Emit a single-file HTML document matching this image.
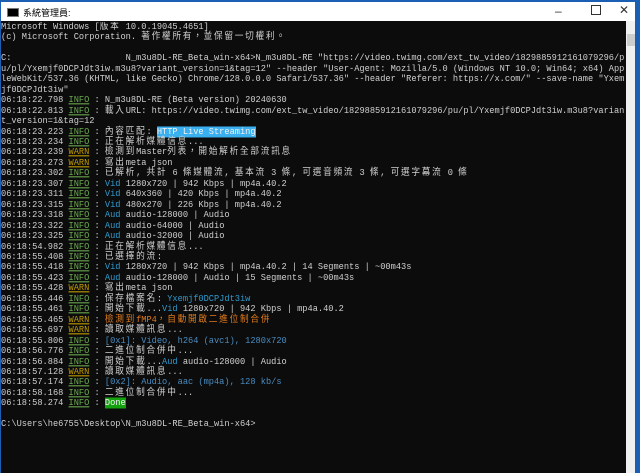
<!DOCTYPE html>
<html><head><meta charset="utf-8"><style>
*{margin:0;padding:0}
body{width:640px;height:473px;background:#1a5fb4;position:relative;overflow:hidden;font-family:"Liberation Mono","Noto Sans CJK TC",monospace}
#win{position:absolute;left:1px;top:2px;width:634px;height:471px;background:#0c0c0c}
#title{position:absolute;left:0;top:0;width:634px;height:19px;background:#fff;font-family:"Liberation Sans","Noto Sans CJK TC",sans-serif;font-size:9px;color:#000}
#title .ic{position:absolute;left:6px;top:6px;width:10px;height:7px;background:#000;border:1px solid #777}
#title .t{position:absolute;left:22px;top:4px}
#title .b{position:absolute;top:2px;font-size:12px;color:#333}
#sb{position:absolute;left:625px;top:19px;width:9px;height:452px;background:#f0f0f0}
#thumb{position:absolute;left:1px;top:13px;width:8px;height:12px;background:#cdcdcd}
#txt{position:absolute;left:0;top:20px;width:625px;height:451px;overflow:hidden;color:#d0d0d0;font-size:8.67px}
.l{height:10.46px;line-height:10.46px;white-space:pre;transform:scaleY(1.1)}
.c{letter-spacing:1.73px}
.i{color:#6aa84f;text-decoration:underline}
.w{color:#c19c00;text-decoration:underline}
.v{color:#2e9bcf}
.h{background:#3ab0f0;color:#f2f2f2}
.o{color:#e07b1c}
.d{background:#13a10e;color:#f2f2f2}
.g{color:#4a8cc0}
</style></head><body>
<div id="win">
<div id="title"><div class="ic"></div><div class="t">系統管理員:</div>
<div class="b" style="left:554px">–</div><div class="b" style="left:590px;top:3px;width:8px;height:8px;border:1px solid #333"></div><div class="b" style="left:618px;top:1px">✕</div></div>
<div id="txt">
<div class="l">Microsoft Windows [<span class="c">版本</span> 10.0.19045.4651]</div>
<div class="l">(c) Microsoft Corporation. <span class="c">著作權所有，並保留一切權利。</span></div>
<div class="l"> </div>
<div class="l">C:                      N_m3u8DL-RE_Beta_win-x64&gt;N_m3u8DL-RE "https://video.twimg.com/ext_tw_video/1829885912161079296/p</div>
<div class="l">u/pl/Yxemjf0DCPJdt3iw.m3u8?variant_version=1&amp;tag=12" --header "User-Agent: Mozilla/5.0 (Windows NT 10.0; Win64; x64) App</div>
<div class="l">leWebKit/537.36 (KHTML, like Gecko) Chrome/128.0.0.0 Safari/537.36" --header "Referer: https://x.com/" --save-name "Yxem</div>
<div class="l">jf0DCPJdt3iw"</div>
<div class="l">06:18:22.798 <span class="i">INFO</span> : N_m3u8DL-RE (Beta version) 20240630</div>
<div class="l">06:18:22.813 <span class="i">INFO</span> : <span class="c">載入</span>URL: https://video.twimg.com/ext_tw_video/1829885912161079296/pu/pl/Yxemjf0DCPJdt3iw.m3u8?varian</div>
<div class="l">t_version=1&amp;tag=12</div>
<div class="l">06:18:23.223 <span class="i">INFO</span> : <span class="c">內容匹配</span>: <span class="h">HTTP Live Streaming</span></div>
<div class="l">06:18:23.234 <span class="i">INFO</span> : <span class="c">正在解析媒體信息</span>...</div>
<div class="l">06:18:23.239 <span class="w">WARN</span> : <span class="c">檢測到</span>Master<span class="c">列表，開始解析全部流訊息</span></div>
<div class="l">06:18:23.273 <span class="w">WARN</span> : <span class="c">寫出</span>meta json</div>
<div class="l">06:18:23.302 <span class="i">INFO</span> : <span class="c">已解析</span>, <span class="c">共計</span> 6 <span class="c">條媒體流</span>, <span class="c">基本流</span> 3 <span class="c">條</span>, <span class="c">可選音頻流</span> 3 <span class="c">條</span>, <span class="c">可選字幕流</span> 0 <span class="c">條</span></div>
<div class="l">06:18:23.307 <span class="i">INFO</span> : <span class="v">Vid</span> 1280x720 | 942 Kbps | mp4a.40.2</div>
<div class="l">06:18:23.311 <span class="i">INFO</span> : <span class="v">Vid</span> 640x360 | 420 Kbps | mp4a.40.2</div>
<div class="l">06:18:23.315 <span class="i">INFO</span> : <span class="v">Vid</span> 480x270 | 226 Kbps | mp4a.40.2</div>
<div class="l">06:18:23.318 <span class="i">INFO</span> : <span class="v">Aud</span> audio-128000 | Audio</div>
<div class="l">06:18:23.322 <span class="i">INFO</span> : <span class="v">Aud</span> audio-64000 | Audio</div>
<div class="l">06:18:23.325 <span class="i">INFO</span> : <span class="v">Aud</span> audio-32000 | Audio</div>
<div class="l">06:18:54.982 <span class="i">INFO</span> : <span class="c">正在解析媒體信息</span>...</div>
<div class="l">06:18:55.408 <span class="i">INFO</span> : <span class="c">已選擇的流</span>:</div>
<div class="l">06:18:55.418 <span class="i">INFO</span> : <span class="v">Vid</span> 1280x720 | 942 Kbps | mp4a.40.2 | 14 Segments | ~00m43s</div>
<div class="l">06:18:55.423 <span class="i">INFO</span> : <span class="v">Aud</span> audio-128000 | Audio | 15 Segments | ~00m43s</div>
<div class="l">06:18:55.428 <span class="w">WARN</span> : <span class="c">寫出</span>meta json</div>
<div class="l">06:18:55.446 <span class="i">INFO</span> : <span class="c">保存檔案名</span>: <span class="v">Yxemjf0DCPJdt3iw</span></div>
<div class="l">06:18:55.461 <span class="i">INFO</span> : <span class="c">開始下載</span>...<span class="v">Vid</span> 1280x720 | 942 Kbps | mp4a.40.2</div>
<div class="l">06:18:55.465 <span class="w">WARN</span> : <span class="o"><span class="c">檢測到</span>fMP4<span class="c">，自動開啟二進位制合併</span></span></div>
<div class="l">06:18:55.697 <span class="w">WARN</span> : <span class="c">讀取媒體訊息</span>...</div>
<div class="l">06:18:55.806 <span class="i">INFO</span> : <span class="g">[0x1]: Video, h264 (avc1), 1280x720</span></div>
<div class="l">06:18:56.776 <span class="i">INFO</span> : <span class="c">二進位制合併中</span>...</div>
<div class="l">06:18:56.884 <span class="i">INFO</span> : <span class="c">開始下載</span>...<span class="v">Aud</span> audio-128000 | Audio</div>
<div class="l">06:18:57.128 <span class="w">WARN</span> : <span class="c">讀取媒體訊息</span>...</div>
<div class="l">06:18:57.174 <span class="i">INFO</span> : <span class="g">[0x2]: Audio, aac (mp4a), 128 kb/s</span></div>
<div class="l">06:18:58.168 <span class="i">INFO</span> : <span class="c">二進位制合併中</span>...</div>
<div class="l">06:18:58.274 <span class="i">INFO</span> : <span class="d">Done</span></div>
<div class="l"> </div>
<div class="l">C:\Users\he6755\Desktop\N_m3u8DL-RE_Beta_win-x64&gt;</div>
</div>
<div id="sb"><div id="thumb"></div></div>
</div>
</body></html>
